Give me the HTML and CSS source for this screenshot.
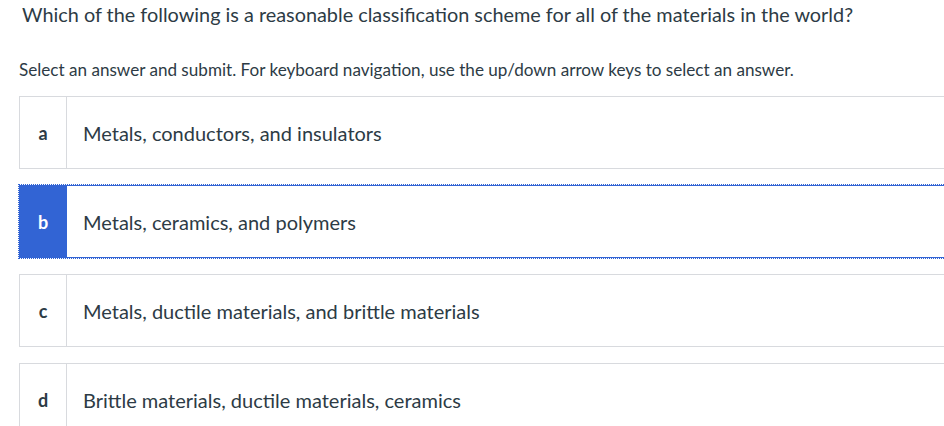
FILE: index.html
```html
<!DOCTYPE html>
<html lang="en">
<head>
    <meta charset="UTF-8">
    <meta name="viewport" content="width=device-width, initial-scale=1.0">
    <title>Question</title>
    <link rel="stylesheet" href="styles.css">
</head>
<body>
    <div class="question">
        <h2 class="question-text">Which of the following is a reasonable classification scheme for all of the materials in the world?</h2>
        <p class="instructions">Select an answer and submit. For keyboard navigation, use the up/down arrow keys to select an answer.</p>
        <ul class="answers">
            <li class="answer">
                <span class="answer-letter">a</span>
                <span class="answer-text">Metals, conductors, and insulators</span>
            </li>
            <li class="answer selected">
                <span class="answer-letter">b</span>
                <span class="answer-text">Metals, ceramics, and polymers</span>
            </li>
            <li class="answer">
                <span class="answer-letter">c</span>
                <span class="answer-text">Metals, ductile materials, and brittle materials</span>
            </li>
            <li class="answer">
                <span class="answer-letter">d</span>
                <span class="answer-text">Brittle materials, ductile materials, ceramics</span>
            </li>
        </ul>
    </div>
</body>
</html>
```

FILE: styles.css
```css
body {
    font-family: Lato, "Open Sans", sans-serif;
    margin: 0;
    background-color: #fff;
    color: #2d3b45;
    overflow: hidden;
}
.question {
    padding: 0 0 0 19px;
    width: 960px;
}
.question-text {
    margin: 0;
    padding: 2px 0 0 3px;
    font-size: 19.85px;
    font-weight: normal;
    line-height: 25px;
}
.instructions {
    margin: 0;
    padding-top: 33px;
    font-size: 17.1px;
    line-height: 20px;
}
.answers {
    list-style: none;
    margin: 16px 0 0;
    padding: 0;
}
.answer {
    display: flex;
    height: 71px;
    border: 1px solid #d8dade;
    margin-bottom: 16px;
}
.answer-letter {
    width: 46px;
    border-right: 1px solid #d8dade;
    display: flex;
    align-items: center;
    justify-content: center;
    font-weight: bold;
    font-size: 18px;
}
.answer-text {
    display: flex;
    align-items: center;
    padding-left: 16px;
    font-size: 20px;
}
.answer.selected {
    border-color: #3264d4;
    outline: 1px dotted #3264d4;
}
.answer.selected .answer-letter {
    background-color: #3264d4;
    border-right-color: #3264d4;
    color: #fff;
}
```
